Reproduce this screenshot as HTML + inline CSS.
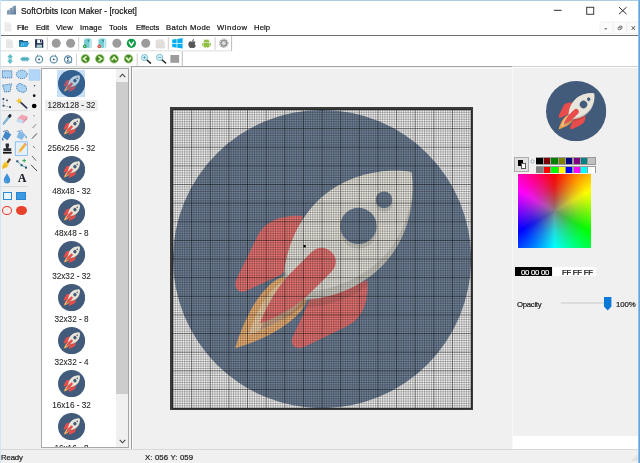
<!DOCTYPE html>
<html><head><meta charset="utf-8"><title>SoftOrbits Icon Maker - [rocket]</title>
<style>
*{margin:0;padding:0;box-sizing:border-box}
html,body{width:640px;height:463px;overflow:hidden;background:#fff}
body{position:relative;font-family:"Liberation Sans",sans-serif;font-size:7.4px;color:#1a1a1a}
.a{position:absolute}
.t{position:absolute;white-space:nowrap;line-height:1;will-change:transform;-webkit-text-stroke:0.2px currentColor}
svg{position:absolute;overflow:visible}
</style></head><body>

<svg width="0" height="0" style="left:0;top:0">
<symbol id="rk" viewBox="0 0 128 128">
<clipPath id="cb"><path d="M0 -53.5C8 -48 19.6 -34 19.6 -16C19.6 -5 15.6 7 6.5 17.5L-6.5 17.5C-15.6 7 -19.6 -5 -19.6 -16C-19.6 -34 -8 -48 0 -53.5Z"/></clipPath>
<clipPath id="cf"><path d="M19.5 -7.2C23 -4.5 26.5 0 27.7 5C28.4 8 28 10.5 27 13.5L20.8 31.5Q19.5 35.3 16.6 35Q15 34.6 14.2 33L8.4 17.2L8 10L16 0Z"/></clipPath>
<clipPath id="cl"><path d="M0 53.5C-3 48 -8.8 36 -8.8 25C-8.8 21 -8 18 -6 15L6 15C8 18 8.8 21 8.8 25C8.8 36 3 48 0 53.5Z"/></clipPath>
<circle cx="64" cy="64" r="64" style="fill:var(--bl,#435b7a)"/>
<g transform="translate(64.5,64.5) rotate(45)">
<path d="M0 53.5C-3 48 -8.8 36 -8.8 25C-8.8 21 -8 18 -6 15L6 15C8 18 8.8 21 8.8 25C8.8 36 3 48 0 53.5Z" fill="#f0a04e"/>
<path d="M0 45.5C-2.5 40 -6.4 32 -6.4 24C-6.4 20 -5.5 17 -4.5 15L4.5 15C5.5 17 6.4 20 6.4 24C6.4 32 2.5 40 0 45.5Z" fill="#f5c98f"/>
<g clip-path="url(#cl)"><path transform="translate(2,2)" d="M0 -5C3.5 -5 6 -2.5 6 1L6 14C6 22 3 32 0 38.5C-3 32 -6 22 -6 14L-6 1C-6 -2.5 -3.5 -5 0 -5Z" fill="#8a4a30" fill-opacity="0.45"/></g>
<path d="M-19.5 -7.2C-23 -4.5 -26.5 0 -27.7 5C-28.4 8 -28 10.5 -27 13.5L-20.8 31.5Q-19.5 35.3 -16.6 35Q-15 34.6 -14.2 33L-8.4 17.2L-8 10L-16 0Z" fill="#e84d4b"/>
<path d="M19.5 -7.2C23 -4.5 26.5 0 27.7 5C28.4 8 28 10.5 27 13.5L20.8 31.5Q19.5 35.3 16.6 35Q15 34.6 14.2 33L8.4 17.2L8 10L16 0Z" fill="#e84d4b"/>
<g clip-path="url(#cf)"><path transform="translate(2.4,2.4)" d="M0 -53.5C8 -48 19.6 -34 19.6 -16C19.6 -5 15.6 7 6.5 17.5L-6.5 17.5C-15.6 7 -19.6 -5 -19.6 -16C-19.6 -34 -8 -48 0 -53.5Z" fill="#c9423f"/></g>
<path d="M0 -53.5C8 -48 19.6 -34 19.6 -16C19.6 -5 15.6 7 6.5 17.5L-6.5 17.5C-15.6 7 -19.6 -5 -19.6 -16C-19.6 -34 -8 -48 0 -53.5Z" fill="#c8c7bb"/>
<g clip-path="url(#cb)"><path transform="translate(-2.4,-2.4)" d="M0 -53.5C8 -48 19.6 -34 19.6 -16C19.6 -5 15.6 7 6.5 17.5L-6.5 17.5C-15.6 7 -19.6 -5 -19.6 -16C-19.6 -34 -8 -48 0 -53.5Z" fill="#e8e6da"/>
<circle cx="1.6" cy="-19.8" r="7.9" fill="#c8c7bb"/>
<circle cx="1.2" cy="-35.7" r="3.7" fill="#c8c7bb"/></g>
<circle cx="0.3" cy="-21.1" r="7.8" style="fill:var(--bl,#435b7a)"/>
<circle cx="0.1" cy="-36.8" r="3.6" style="fill:var(--bl,#435b7a)"/>
<path d="M0 -5C3.5 -5 6 -2.5 6 1L6 14C6 22 3 32 0 38.5C-3 32 -6 22 -6 14L-6 1C-6 -2.5 -3.5 -5 0 -5Z" fill="#e84d4b"/>
</g>
</symbol>
</svg>
<div class="a" style="left:0;top:0;width:640px;height:1px;background:#a9cdea"></div>
<div class="t" style="left:20.60px;top:6.97px;font-size:8.3px;letter-spacing:0.036px;color:#111;">SoftOrbits Icon Maker - [rocket]</div>
<div class="t" style="left:17.10px;top:23.98px;font-size:7.7px;letter-spacing:-0.277px;color:#111;">File</div>
<div class="t" style="left:36.10px;top:23.98px;font-size:7.7px;letter-spacing:-0.042px;color:#111;">Edit</div>
<div class="t" style="left:55.80px;top:23.98px;font-size:7.7px;letter-spacing:0.062px;color:#111;">View</div>
<div class="t" style="left:80.10px;top:23.98px;font-size:7.7px;letter-spacing:0.180px;color:#111;">Image</div>
<div class="t" style="left:109.40px;top:23.98px;font-size:7.7px;letter-spacing:0.125px;color:#111;">Tools</div>
<div class="t" style="left:135.50px;top:23.98px;font-size:7.7px;letter-spacing:-0.021px;color:#111;">Effects</div>
<div class="t" style="left:165.75px;top:23.98px;font-size:7.7px;letter-spacing:0.366px;color:#111;">Batch Mode</div>
<div class="t" style="left:216.75px;top:23.98px;font-size:7.7px;letter-spacing:0.561px;color:#111;">Window</div>
<div class="t" style="left:254.25px;top:23.98px;font-size:7.7px;letter-spacing:0.104px;color:#111;">Help</div>
<div class="a" style="left:0;top:34.6px;width:640px;height:1.2px;background:#6e6e6e"></div>
<div class="a" style="left:0;top:66px;width:131px;height:1px;background:#d6d6d6"></div>
<div class="a" style="left:131px;top:66.1px;width:381px;height:1.7px;background:#a3a3a3"></div>
<div class="a" style="left:512px;top:66.1px;width:128px;height:1.1px;background:#d2d2d2"></div>
<svg style="left:0;top:0" width="640" height="70" viewBox="0 0 640 70"><path d="M0 50.8H231.6" stroke="#dedede" stroke-width="1" fill="none"/><path d="M231.6 36V50.8M182.3 51.3V66.5" stroke="#bdbdbd" stroke-width="1" fill="none"/><path d="M47.3 37.2V49.6M78.7 37.2V49.6M168.3 37.2V49.6M215.1 37.2V49.6M76.6 53.5V65.8M137.2 53.5V65.8" stroke="#c2c2c2" stroke-width="0.8" fill="none"/><g id="i-new"><path d="M6.6 39.8H10.6L12.6 41.8V47.9H6.6Z" fill="#ececec" stroke="#d6d6d6" stroke-width="0.6"/><path d="M7.6 42.5H11.4M7.6 44H11.4M7.6 45.5H11.4" stroke="#dadada" stroke-width="0.6"/></g><g id="i-open"><path d="M19.1 40H22.6L23.6 41.1H27.9V42.6H19.1Z" fill="#1a6288"/><path d="M19.1 46.8V41.8L20.6 42.4H27.9L27 46.8Z" fill="#1b6d9a"/><path d="M19.1 46.8L21.3 42.5H29.6L27.2 46.8Z" fill="#2aa3df"/><path d="M21.9 43.6L21 45.4M24 43.4L23 45.6" stroke="#9fdcf5" stroke-width="0.7"/></g><g id="i-save"><path d="M35.1 39.2H42L43.3 40.5V47.8H35.1Z" fill="#1b2b4b"/><rect x="37.1" y="39.6" width="4.5" height="3.6" fill="#f3f6fa"/><rect x="40" y="39.9" width="1" height="2.4" fill="#1b2b4b"/><rect x="36.6" y="44.6" width="5.4" height="3.2" fill="#a9c9cc"/></g><circle cx="56.25" cy="43.3" r="4.5" fill="#9b9b9b"/><circle cx="70.6" cy="43.3" r="4.5" fill="#9b9b9b"/><circle cx="116.9" cy="43.3" r="4.5" fill="#9b9b9b"/><circle cx="145.75" cy="43.3" r="4.5" fill="#9b9b9b"/><path d="M84.10000000000001 38.9H91.7V47.8H84.10000000000001Z" fill="#c9ecf2"/><path d="M84.10000000000001 39.4H89.5V47.8H84.10000000000001Z" fill="#74cdd0"/><path d="M84.9 38.4H90.9V39.5H84.9Z" fill="#8fd6dc"/><path d="M86.9 39.6L89.30000000000001 39.6L89.30000000000001 42.4Z" fill="#2f8797"/><path d="M91.30000000000001 39.6V47.6" stroke="#9bd5e0" stroke-width="0.7"/><circle cx="84.7" cy="46.4" r="1.8" fill="#2a9a50"/><circle cx="84.7" cy="46.4" r="0.6" fill="#fff" fill-opacity="0.8"/><path d="M98.60000000000001 38.9H106.2V47.8H98.60000000000001Z" fill="#c9ecf2"/><path d="M98.60000000000001 39.4H104.0V47.8H98.60000000000001Z" fill="#74cdd0"/><path d="M99.4 38.4H105.4V39.5H99.4Z" fill="#8fd6dc"/><path d="M101.4 39.6L103.80000000000001 39.6L103.80000000000001 42.4Z" fill="#2f8797"/><path d="M105.80000000000001 39.6V47.6" stroke="#9bd5e0" stroke-width="0.7"/><circle cx="99.2" cy="46.4" r="1.8" fill="#e24848"/><circle cx="99.2" cy="46.4" r="0.6" fill="#fff" fill-opacity="0.8"/><circle cx="131.4" cy="43.3" r="4.6" fill="#0d9a45"/><path d="M129 41.6L131.4 45.6L133.8 41.6" fill="none" stroke="#fff" stroke-width="1.5" stroke-linejoin="round"/><path d="M156 40.6H162.6L164.6 42.4V48H156Z" fill="#e6e3dc" stroke="#d4d4d4" stroke-width="0.6"/><path d="M157.4 39.6H163.4V41" fill="none" stroke="#d9d9d9" stroke-width="0.6"/><path d="M157.3 43.3H163M157.3 44.9H163M157.3 46.4H163" stroke="#d3d3d3" stroke-width="0.6"/><path d="M172.2 39.6L176.6 39V43H172.2ZM177.3 38.9L182.6 38.1V43H177.3ZM172.2 43.7H176.6V47.7L172.2 47.1ZM177.3 43.7H182.6V48.5L177.3 47.8Z" fill="#06aef0"/><path d="M192.3 41.6C193.4 41.1 194.6 41 195.6 41.9C194.4 42.8 194.3 44.6 195.9 45.5C195.3 47 194.3 48.2 193.4 48.1C192.7 48 192.5 47.7 192.1 47.7C191.6 47.7 191.4 48.1 190.7 48.1C189.5 48 188.3 45.9 188.3 44.2C188.3 42 190 41 191.2 41.4C191.7 41.5 192 41.7 192.3 41.6Z" fill="#575757"/><path d="M192.2 41.1C192.1 40 193 39.1 194 39C194.1 40.1 193.3 41 192.2 41.1Z" fill="#575757"/><g fill="#8fc043"><path d="M203.5 42.4A3 3 0 0 1 209.5 42.4Z"/><path d="M203.5 42.9H209.5V46.4Q209.5 47 208.9 47H204.1Q203.5 47 203.5 46.4Z"/><rect x="202.2" y="42.9" width="0.95" height="3" rx="0.45"/><rect x="209.85" y="42.9" width="0.95" height="3" rx="0.45"/><rect x="204.6" y="46.5" width="1" height="1.7" rx="0.4"/><rect x="207.4" y="46.5" width="1" height="1.7" rx="0.4"/><path d="M204.6 40.2L204 39.3M208.4 40.2L209 39.3" stroke="#8fc043" stroke-width="0.4"/></g><g><circle cx="223.8" cy="43.2" r="4.1" fill="none" stroke="#9a9a9a" stroke-width="1.2" stroke-dasharray="1.2 0.95"/><circle cx="223.8" cy="43.2" r="3.5" fill="#8f8f8f"/><circle cx="223.8" cy="43.2" r="2.1" fill="#d9d9d9"/></g><path d="M10.1 53.9L13 57H11.7V60.8H13L10.1 63.9L7.2 60.8H8.5V57H7.2Z" fill="#5fbbc9"/><path d="M8.5 58.9H11.7" stroke="#e8f6f9" stroke-width="0.7"/><path d="M10.1 55.5V62.3" stroke="#8ad3dd" stroke-width="0.6" stroke-dasharray="0.6 0.6"/><path d="M19.9 59.1L22.9 56.4V57.6H26.9V56.4L29.9 59.1L26.9 61.8V60.6H22.9V61.8Z" fill="#5fbbc9"/><path d="M23.4 57.4V60.8M24.9 56.6V61.6M26.4 57.4V60.8" stroke="#3a93a8" stroke-width="0.55"/><circle cx="39.1" cy="59.4" r="3.5" fill="none" stroke="#5b8ca6" stroke-width="1.25"/><circle cx="39.1" cy="59.4" r="0.95" fill="#2b5d7c"/><path d="M37 54.4L39.6 55.6L37.4 57.2Z" fill="#5b8ca6"/><path d="M38.8 55V56.6" stroke="#fff" stroke-width="0.9"/><circle cx="53.75" cy="59.4" r="3.5" fill="none" stroke="#5b8ca6" stroke-width="1.25"/><circle cx="53.75" cy="59.4" r="0.95" fill="#2b5d7c"/><path d="M55.9 54.4L53.3 55.6L55.5 57.2Z" fill="#5b8ca6"/><path d="M54.1 55V56.6" stroke="#fff" stroke-width="0.9"/><circle cx="68.1" cy="59.4" r="3.6" fill="none" stroke="#5b8ca6" stroke-width="1.25"/><path d="M69.6 57.7H66.9L68.3 59.4L66.9 61.1H69.6" fill="none" stroke="#2c5f7c" stroke-width="1"/><path d="M70.6 61.4L72.4 62.4L70.6 63.4Z" fill="#5b8ca6"/><circle cx="85.4" cy="58.8" r="4.3" fill="#47852a" stroke="#9ccb76" stroke-width="0.8"/><path d="M86.6 56.4L83.6 58.8L86.6 61.2" fill="none" stroke="#dcf8b8" stroke-width="1.7" stroke-linejoin="miter"/><circle cx="99.75" cy="58.8" r="4.3" fill="#47852a" stroke="#9ccb76" stroke-width="0.8"/><path d="M98.55 56.4L101.55 58.8L98.55 61.2" fill="none" stroke="#dcf8b8" stroke-width="1.7" stroke-linejoin="miter"/><circle cx="114.1" cy="58.8" r="4.3" fill="#47852a" stroke="#9ccb76" stroke-width="0.8"/><path d="M111.7 60.2L114.1 57.2L116.5 60.2" fill="none" stroke="#dcf8b8" stroke-width="1.7" stroke-linejoin="miter"/><circle cx="128.5" cy="58.8" r="4.3" fill="#47852a" stroke="#9ccb76" stroke-width="0.8"/><path d="M126.1 57.4L128.5 60.4L130.9 57.4" fill="none" stroke="#dcf8b8" stroke-width="1.7" stroke-linejoin="miter"/><path d="M146.7 59.7L150.5 63.1" stroke="#2a2a2a" stroke-width="1.5" stroke-linecap="round"/><circle cx="144.5" cy="57.5" r="3.1" fill="#d9f0f6" stroke="#62b4c6" stroke-width="0.8"/><path d="M142.9 57.5H146.1" stroke="#3fa0b6" stroke-width="0.7"/><path d="M144.5 55.9V59.1" stroke="#3fa0b6" stroke-width="0.7"/><path d="M161.79999999999998 59.6L165.6 63.0" stroke="#2a2a2a" stroke-width="1.5" stroke-linecap="round"/><circle cx="159.6" cy="57.4" r="3.1" fill="#d9f0f6" stroke="#62b4c6" stroke-width="0.8"/><path d="M158.0 57.4H161.2" stroke="#3fa0b6" stroke-width="0.7"/><rect x="170.4" y="55" width="8.7" height="7.8" fill="#9c9c9c"/></svg>
<svg style="left:0;top:0" width="640" height="36" viewBox="0 0 640 36"><defs><linearGradient id="ag" x1="0" y1="0" x2="1" y2="1"><stop offset="0" stop-color="#9fb7cb"/><stop offset="1" stop-color="#4f6c8a"/></linearGradient></defs><path d="M7 14.6V10.4L9.8 9.6V8.2L12.8 7.2V6.2L15.9 5.4V14.6Z" fill="url(#ag)"/><path d="M9.9 9.6V14.6M12.9 7.2V14.6" stroke="#dfe8f0" stroke-width="0.4"/><path d="M4.9 22.7H8.9L10.9 24.7V31H4.9Z" fill="#efefef" stroke="#dedede" stroke-width="0.5"/><path d="M6 25.6H9.8M6 27.2H9.8M6 28.8H9.8" stroke="#e0e0e0" stroke-width="0.6"/><path d="M553.8 10.3H561.6" stroke="#2b2b2b" stroke-width="1"/><rect x="586.7" y="7.3" width="7" height="7" fill="none" stroke="#3a3a3a" stroke-width="1"/><path d="M619 7.1L626.6 14.2M626.6 7.1L619 14.2" stroke="#2b2b2b" stroke-width="1"/><rect x="600" y="22" width="13" height="11.6" fill="#fbfbfb" stroke="#ececec" stroke-width="0.6"/><rect x="613.6" y="22" width="13" height="11.6" fill="#fbfbfb" stroke="#ececec" stroke-width="0.6"/><rect x="627.2" y="22" width="11" height="11.6" fill="#fbfbfb" stroke="#ececec" stroke-width="0.6"/><path d="M604.6 28.8H607" stroke="#555" stroke-width="1"/><path d="M618.2 27.4H620.8V29.6H618.2ZM619.4 27.2V26.2H622V28.4H621" fill="none" stroke="#555" stroke-width="0.7"/><path d="M631.6 26.2L635 30M635 26.2L631.6 30" stroke="#444" stroke-width="0.9"/></svg>
<div class="a" style="left:0;top:67.4px;width:640px;height:382px;background:#f0f0f0"></div>
<div class="a" style="left:132px;top:67.8px;width:380px;height:0.9px;background:#fbfbfb"></div>
<div class="a" style="left:512px;top:67.2px;width:128px;height:1px;background:#fdfdfd"></div>
<div class="a" style="left:511.8px;top:67.2px;width:1px;height:382px;background:#f9f9f9"></div>
<div class="a" style="left:512.5px;top:435.8px;width:127.5px;height:13.8px;background:#fff"></div>
<div class="a" style="left:0;top:449.4px;width:640px;height:13.6px;background:#f0f0f0;border-top:1px solid #d9d9d9"></div>
<svg style="left:632px;top:455px" width="6" height="6" viewBox="0 0 6 6"><path d="M4.5 0.5h1v1h-1zM4.5 2.5h1v1h-1zM4.5 4.5h1v1h-1zM2.5 2.5h1v1h-1zM2.5 4.5h1v1h-1zM0.5 4.5h1v1h-1z" fill="#bdbdbd"/></svg>
<div class="t" style="left:1.30px;top:454.00px;font-size:7.8px;letter-spacing:-0.149px;color:#1a1a1a;">Ready</div>
<div class="t" style="left:144.50px;top:454.00px;font-size:7.8px;letter-spacing:0.124px;color:#1a1a1a;">X: 056 Y: 059</div>
<div class="a" style="left:130.8px;top:67px;width:1.2px;height:382px;background:#9c9c9c"></div>
<div class="a" style="left:129px;top:67px;width:1.8px;height:382px;background:#f6f6f6"></div>
<div class="a" style="left:132px;top:67.8px;width:0.9px;height:381.6px;background:#fbfbfb"></div>
<div class="a" style="left:41.3px;top:68.2px;width:87.5px;height:379.5px;background:#fff;border:1px solid #a8a8a8;overflow:hidden" id="list">
<div class="a" style="left:73.9px;top:0;width:11.8px;height:379px;background:#f0f0f0"></div>
<div class="a" style="left:73.9px;top:13.1px;width:11.8px;height:311.3px;background:#cdcdcd"></div>
<svg style="left:76.6px;top:3.7px" width="7" height="5" viewBox="0 0 7 5"><path d="M0.7 4.2L3.5 1.2L6.3 4.2" fill="none" stroke="#404040" stroke-width="1.1"/></svg>
<svg style="left:76.6px;top:369.5px" width="7" height="5" viewBox="0 0 7 5"><path d="M0.7 0.8L3.5 3.8L6.3 0.8" fill="none" stroke="#404040" stroke-width="1.1"/></svg>
<div class="a" style="left:3px;top:30.6px;width:52.5px;height:11.6px;background:#efefef"></div>
<svg style="left:15.6px;top:0.8px" width="27.2" height="27.2"><use href="#rk" width="27.2" height="27.2"/></svg>
<div class="t" style="left:-0.7px;width:59px;text-align:center;top:32.7px;font-size:8.2px;color:#262626;-webkit-text-stroke:0.08px #262626">128x128 - 32</div>
<svg style="left:15.6px;top:43.7px" width="27.2" height="27.2"><use href="#rk" width="27.2" height="27.2"/></svg>
<div class="t" style="left:-0.7px;width:59px;text-align:center;top:75.6px;font-size:8.2px;color:#262626;-webkit-text-stroke:0.08px #262626">256x256 - 32</div>
<svg style="left:15.6px;top:86.6px" width="27.2" height="27.2"><use href="#rk" width="27.2" height="27.2"/></svg>
<div class="t" style="left:-0.7px;width:59px;text-align:center;top:118.5px;font-size:8.2px;color:#262626;-webkit-text-stroke:0.08px #262626">48x48 - 32</div>
<svg style="left:15.6px;top:129.4px" width="27.2" height="27.2"><use href="#rk" width="27.2" height="27.2"/></svg>
<div class="t" style="left:-0.7px;width:59px;text-align:center;top:161.3px;font-size:8.2px;color:#262626;-webkit-text-stroke:0.08px #262626">48x48 - 8</div>
<svg style="left:15.6px;top:172.3px" width="27.2" height="27.2"><use href="#rk" width="27.2" height="27.2"/></svg>
<div class="t" style="left:-0.7px;width:59px;text-align:center;top:204.2px;font-size:8.2px;color:#262626;-webkit-text-stroke:0.08px #262626">32x32 - 32</div>
<svg style="left:15.6px;top:215.2px" width="27.2" height="27.2"><use href="#rk" width="27.2" height="27.2"/></svg>
<div class="t" style="left:-0.7px;width:59px;text-align:center;top:247.1px;font-size:8.2px;color:#262626;-webkit-text-stroke:0.08px #262626">32x32 - 8</div>
<svg style="left:15.6px;top:258.1px" width="27.2" height="27.2"><use href="#rk" width="27.2" height="27.2"/></svg>
<div class="t" style="left:-0.7px;width:59px;text-align:center;top:290.0px;font-size:8.2px;color:#262626;-webkit-text-stroke:0.08px #262626">32x32 - 4</div>
<svg style="left:15.6px;top:301.0px" width="27.2" height="27.2"><use href="#rk" width="27.2" height="27.2"/></svg>
<div class="t" style="left:-0.7px;width:59px;text-align:center;top:332.9px;font-size:8.2px;color:#262626;-webkit-text-stroke:0.08px #262626">16x16 - 32</div>
<svg style="left:15.6px;top:343.8px" width="27.2" height="27.2"><use href="#rk" width="27.2" height="27.2"/></svg>
<div class="t" style="left:-0.7px;width:59px;text-align:center;top:375.7px;font-size:8.2px;color:#262626;-webkit-text-stroke:0.08px #262626">16x16 - 8</div>
<div class="a" style="left:15px;top:0.7px;width:27.7px;height:27.4px;background:rgba(0,113,218,0.22)"></div>
</div>
<svg style="left:0;top:0" width="44" height="230" viewBox="0 0 44 230"><rect x="2.4" y="70.8" width="9.4" height="7" fill="#a9d3f3" stroke="#2b5f9e" stroke-width="0.8" stroke-dasharray="1.2 0.8"/><ellipse cx="21.8" cy="74.4" rx="5.4" ry="4.2" fill="#a9d3f3" stroke="#2b5f9e" stroke-width="0.8" stroke-dasharray="1.2 0.8"/><rect x="29" y="69.8" width="11" height="10.4" fill="#b3d7f6" stroke="#9ccaf2" stroke-width="0.6"/><path d="M2.6 85.2L11.6 83.8L10 91.6L4.6 92Z" fill="#a9d3f3" stroke="#2b5f9e" stroke-width="0.8" stroke-dasharray="1.2 0.8"/><path d="M17 85.5C18 83 21.5 83 22.5 85C24.5 84.5 27 86.5 26.6 89.5C26 92.5 22.5 93.2 20.5 91.5C18 92 15.8 88.5 17 85.5Z" fill="#a9d3f3" stroke="#2b5f9e" stroke-width="0.8" stroke-dasharray="1.2 0.8"/><circle cx="34.5" cy="85.7" r="0.65" fill="#222"/><circle cx="34.2" cy="95.7" r="1.35" fill="#111"/><circle cx="34.2" cy="106" r="2.35" fill="#000"/><path d="M3.4 99V105.6L10 107.2" fill="none" stroke="#5b6b80" stroke-width="0.6" stroke-dasharray="0.9 0.6"/><rect x="2.5" y="98" width="1.8" height="1.8" fill="#33475f"/><rect x="6.2" y="99.6" width="1.6" height="1.6" fill="#33475f"/><rect x="2.6" y="104.8" width="1.8" height="1.8" fill="#33475f"/><rect x="9.2" y="106.2" width="1.8" height="1.8" fill="#33475f"/><path d="M20.2 101.8L26.6 107.8" stroke="#2c3350" stroke-width="1.7" stroke-linecap="round"/><path d="M18.6 97.6L19.6 99.5L21.8 99.2L20.5 100.9L21.7 102.8L19.5 102.3L18 104L17.9 101.7L15.9 100.8L18 100Z" fill="#f6c627"/><path d="M2 110.6H27.5M0 186.6H28" stroke="#d2d2d2" stroke-width="0.8"/><path d="M9.4 114.2C10.8 113.6 12 115 11.2 116.4L9.6 118.2L7.6 116.2Z" fill="#1f2630"/><path d="M8 116.8L9.2 118L4.8 123.6L3 124.6L3.4 122.6Z" fill="#8fc4ea" stroke="#4a7eab" stroke-width="0.5"/><path d="M21.6 114.6L27.8 116.4L23.4 120.4L17.2 118.6Z" fill="#f3a6b6"/><path d="M17.2 118.6L23.4 120.4L22.6 123.6L16.4 121.8Z" fill="#bfdcf2"/><path d="M23.4 120.4L27.8 116.4L27 119.4L22.6 123.6Z" fill="#e48ea2"/><circle cx="34" cy="115.8" r="0.5" fill="#333"/><path d="M32.6 128L36 124.2" stroke="#333" stroke-width="0.6"/><path d="M32 138.6L37 133.4" stroke="#333" stroke-width="0.9"/><path d="M5.6 131L11.4 134.6L7.4 140.2L2.6 137Z" fill="#3f86c8"/><path d="M3 131.6L7.6 130.4L9 133" fill="none" stroke="#2a5c8e" stroke-width="0.7"/><path d="M2.2 137.4C1.6 139 2 140.4 3 140.4C4 140.4 3.8 138.6 2.2 137.4Z" fill="#2c6cb0"/><path d="M19.4 131L25.6 134.4L22 140L16.6 137.2Z" fill="#86b9e4"/><path d="M17 131.6L21.6 130.4L23 133" fill="none" stroke="#5b8fbf" stroke-width="0.7"/><path d="M25.6 135C26.8 136.4 27.2 138 26.4 138.6C25.6 139 25 137 25.6 135Z" fill="#5a97cf"/><path d="M5.8 143.4H8.8C9.6 145 8.6 146.6 8.4 148.2H11.2V151H3.4V148.2H6.2C6 146.6 5 145 5.8 143.4Z" fill="#2b2f38"/><rect x="3" y="151.8" width="8.6" height="1.8" fill="#111"/><rect x="15.3" y="141.8" width="12.2" height="13.6" fill="#e4f0fb" stroke="#79b7ee" stroke-width="0.8"/><path d="M24.2 143.6L26.2 145.2L20.6 152.2L18.6 150.6Z" fill="#f2b43c"/><path d="M18.6 150.6L20.6 152.2L18 153.4Z" fill="#f0d9b0"/><path d="M24.2 143.6L25 142.8L26.9 144.4L26.2 145.2Z" fill="#e77f6a"/><path d="M33 146L35 148.2" stroke="#333" stroke-width="0.6"/><path d="M32 156L36 160.6" stroke="#333" stroke-width="0.7"/><path d="M31 164.8L37 171" stroke="#333" stroke-width="0.9"/><path d="M9.2 158L11.2 159.4L8 163.4L6.4 162.2Z" fill="#5a3a22"/><path d="M6 161.8L8.6 163.8C8.6 166 7 168.6 2.4 168.6C1.8 166 3 162.6 6 161.8Z" fill="#f7c52e"/><path d="M2.4 168.6C4 167.6 5 166.4 5.4 165" stroke="#c9951c" stroke-width="0.5" fill="none"/><path d="M17.4 161.4L21.6 165.2L26 167.6" fill="none" stroke="#3f9db3" stroke-width="0.9"/><rect x="16.3" y="160.3" width="2" height="2" fill="#24506e"/><rect x="20.6" y="164.2" width="2" height="2" fill="#24506e"/><rect x="25" y="166.6" width="2" height="2" fill="#24506e"/><path d="M22.4 160.6H26M24.2 158.8V162.4" stroke="#2fa84f" stroke-width="1"/><path d="M7 173.2C8.6 176 10.2 178 10.2 180.2A3.2 3.2 0 0 1 3.8 180.2C3.8 178 5.4 176 7 173.2Z" fill="#3b93db"/><path d="M5.2 180.4A1.9 1.9 0 0 0 6.8 182.2" stroke="#a9d4f5" stroke-width="0.6" fill="none"/></svg>
<div class="t" style="left:17.6px;top:173.2px;font-family:'Liberation Serif',serif;font-weight:bold;font-size:11.5px;color:#1b1f2a">A</div>
<div class="a" style="left:3px;top:192px;width:9.2px;height:7.6px;background:#eaf4fd;border:1.3px solid #2b8bd9"></div>
<div class="a" style="left:16.4px;top:192px;width:9.8px;height:7.6px;background:#3d9be2;border:0.8px solid #2b83cf"></div>
<div class="a" style="left:2.2px;top:205.6px;width:10px;height:9px;border-radius:50%;border:1.5px solid #e23b2b;background:#fbeeee"></div>
<div class="a" style="left:16.2px;top:205.6px;width:10.8px;height:9px;border-radius:50%;background:#e8412c"></div>
<div class="a" style="left:170.4px;top:107.2px;width:303px;height:302.9px;background:#3a3a3a"></div>
<div class="a" style="left:173.1px;top:109.9px;width:298.1px;height:298.1px;background:#f0f0f0"></div>
<svg style="left:173.1px;top:109.9px" width="298.1" height="298.1" viewBox="0 0 128 128"><use href="#rk" width="128" height="128"/><rect width="128" height="128" fill="#fff" fill-opacity="0.25"/><rect x="56" y="58" width="1" height="1" fill="#000"/><path d="M1 0V128M0 1H128M2 0V128M0 2H128M3 0V128M0 3H128M4 0V128M0 4H128M5 0V128M0 5H128M6 0V128M0 6H128M7 0V128M0 7H128M9 0V128M0 9H128M10 0V128M0 10H128M11 0V128M0 11H128M12 0V128M0 12H128M13 0V128M0 13H128M14 0V128M0 14H128M15 0V128M0 15H128M17 0V128M0 17H128M18 0V128M0 18H128M19 0V128M0 19H128M20 0V128M0 20H128M21 0V128M0 21H128M22 0V128M0 22H128M23 0V128M0 23H128M25 0V128M0 25H128M26 0V128M0 26H128M27 0V128M0 27H128M28 0V128M0 28H128M29 0V128M0 29H128M30 0V128M0 30H128M31 0V128M0 31H128M33 0V128M0 33H128M34 0V128M0 34H128M35 0V128M0 35H128M36 0V128M0 36H128M37 0V128M0 37H128M38 0V128M0 38H128M39 0V128M0 39H128M41 0V128M0 41H128M42 0V128M0 42H128M43 0V128M0 43H128M44 0V128M0 44H128M45 0V128M0 45H128M46 0V128M0 46H128M47 0V128M0 47H128M49 0V128M0 49H128M50 0V128M0 50H128M51 0V128M0 51H128M52 0V128M0 52H128M53 0V128M0 53H128M54 0V128M0 54H128M55 0V128M0 55H128M57 0V128M0 57H128M58 0V128M0 58H128M59 0V128M0 59H128M60 0V128M0 60H128M61 0V128M0 61H128M62 0V128M0 62H128M63 0V128M0 63H128M65 0V128M0 65H128M66 0V128M0 66H128M67 0V128M0 67H128M68 0V128M0 68H128M69 0V128M0 69H128M70 0V128M0 70H128M71 0V128M0 71H128M73 0V128M0 73H128M74 0V128M0 74H128M75 0V128M0 75H128M76 0V128M0 76H128M77 0V128M0 77H128M78 0V128M0 78H128M79 0V128M0 79H128M81 0V128M0 81H128M82 0V128M0 82H128M83 0V128M0 83H128M84 0V128M0 84H128M85 0V128M0 85H128M86 0V128M0 86H128M87 0V128M0 87H128M89 0V128M0 89H128M90 0V128M0 90H128M91 0V128M0 91H128M92 0V128M0 92H128M93 0V128M0 93H128M94 0V128M0 94H128M95 0V128M0 95H128M97 0V128M0 97H128M98 0V128M0 98H128M99 0V128M0 99H128M100 0V128M0 100H128M101 0V128M0 101H128M102 0V128M0 102H128M103 0V128M0 103H128M105 0V128M0 105H128M106 0V128M0 106H128M107 0V128M0 107H128M108 0V128M0 108H128M109 0V128M0 109H128M110 0V128M0 110H128M111 0V128M0 111H128M113 0V128M0 113H128M114 0V128M0 114H128M115 0V128M0 115H128M116 0V128M0 116H128M117 0V128M0 117H128M118 0V128M0 118H128M119 0V128M0 119H128M121 0V128M0 121H128M122 0V128M0 122H128M123 0V128M0 123H128M124 0V128M0 124H128M125 0V128M0 125H128M126 0V128M0 126H128M127 0V128M0 127H128" stroke="#000" stroke-opacity="0.36" stroke-width="0.3" fill="none"/><path d="M0 0V128M0 0H128M8 0V128M0 8H128M16 0V128M0 16H128M24 0V128M0 24H128M32 0V128M0 32H128M40 0V128M0 40H128M48 0V128M0 48H128M56 0V128M0 56H128M64 0V128M0 64H128M72 0V128M0 72H128M80 0V128M0 80H128M88 0V128M0 88H128M96 0V128M0 96H128M104 0V128M0 104H128M112 0V128M0 112H128M120 0V128M0 120H128M128 0V128M0 128H128" stroke="#000" stroke-opacity="0.6" stroke-width="0.38" fill="none"/></svg>
<svg style="left:545.8px;top:80.9px" width="60.3" height="60.3"><use href="#rk" width="60.3" height="60.3"/></svg>
<div class="a" style="left:514.4px;top:157px;width:14.8px;height:15px;background:#e1e1e1;border:1px solid #adadad"></div>
<div class="a" style="left:517.5px;top:160.4px;width:5.6px;height:5.4px;background:#000"></div>
<div class="a" style="left:520.5px;top:163px;width:5.8px;height:6px;background:#fff;border:0.7px solid #555"></div>
<svg style="left:530.3px;top:158.5px" width="5" height="5" viewBox="0 0 5 5"><circle cx="2.5" cy="2.5" r="1.7" fill="none" stroke="#7f8fa0" stroke-width="0.7"/></svg>
<div class="a" style="left:535.6px;top:156.8px;width:60.6px;height:7.8px;background:#9a9a9a"></div>
<div class="a" style="left:535.6px;top:165.8px;width:60.6px;height:7.6px;background:#9a9a9a"></div>
<div class="a" style="left:536.40px;top:157.6px;width:6.3px;height:6.2px;background:#000000"></div>
<div class="a" style="left:536.40px;top:166.6px;width:6.3px;height:6px;background:#808080"></div>
<div class="a" style="left:543.82px;top:157.6px;width:6.3px;height:6.2px;background:#800000"></div>
<div class="a" style="left:543.82px;top:166.6px;width:6.3px;height:6px;background:#ff0000"></div>
<div class="a" style="left:551.24px;top:157.6px;width:6.3px;height:6.2px;background:#008000"></div>
<div class="a" style="left:551.24px;top:166.6px;width:6.3px;height:6px;background:#00ff00"></div>
<div class="a" style="left:558.66px;top:157.6px;width:6.3px;height:6.2px;background:#808000"></div>
<div class="a" style="left:558.66px;top:166.6px;width:6.3px;height:6px;background:#ffff00"></div>
<div class="a" style="left:566.08px;top:157.6px;width:6.3px;height:6.2px;background:#000080"></div>
<div class="a" style="left:566.08px;top:166.6px;width:6.3px;height:6px;background:#0000ff"></div>
<div class="a" style="left:573.50px;top:157.6px;width:6.3px;height:6.2px;background:#800080"></div>
<div class="a" style="left:573.50px;top:166.6px;width:6.3px;height:6px;background:#ff00ff"></div>
<div class="a" style="left:580.92px;top:157.6px;width:6.3px;height:6.2px;background:#008080"></div>
<div class="a" style="left:580.92px;top:166.6px;width:6.3px;height:6px;background:#00ffff"></div>
<div class="a" style="left:588.34px;top:157.6px;width:6.3px;height:6.2px;background:#c0c0c0"></div>
<div class="a" style="left:588.34px;top:166.6px;width:6.3px;height:6px;background:#ffffff"></div>
<div class="a" style="left:517.5px;top:174.1px;width:73.8px;height:73.6px;background:radial-gradient(circle closest-side at 50% 50%,rgba(128,128,128,0.95) 0%,rgba(128,128,128,0.6) 28%,rgba(128,128,128,0.25) 60%,rgba(128,128,128,0) 100%),conic-gradient(from 0deg at 50% 50%,#ff0000,#ffff00 16.67%,#00ff00 33.33%,#00ffff 50%,#0000ff 66.67%,#ff00ff 83.33%,#ff0000)"></div>
<div class="a" style="left:516.6px;top:174.1px;width:0.9px;height:73.6px;background:#fcfcfc"></div>
<div class="a" style="left:515.3px;top:267.4px;width:37.2px;height:8.9px;background:#000"></div>
<div class="a" style="left:552.5px;top:267.4px;width:43.4px;height:8.9px;background:#fff"></div>
<div class="t" style="left:521.00px;top:269.00px;font-size:7.8px;letter-spacing:-0.282px;color:#fff;">00 00 00</div>
<div class="t" style="left:562.00px;top:269.00px;font-size:7.8px;letter-spacing:-0.277px;color:#000;">FF FF FF</div>
<div class="t" style="left:516.60px;top:300.50px;font-size:7.8px;letter-spacing:-0.306px;color:#1a1a1a;">Opacity</div>
<div class="a" style="left:561px;top:302.3px;width:44px;height:1.8px;background:#dcdcdc"></div>
<svg style="left:604.2px;top:296.8px" width="7.4" height="13.6" viewBox="0 0 7.4 13.6"><path d="M0 0H7.4V9.6L3.7 13.6L0 9.6Z" fill="#0a78d7"/></svg>
<div class="t" style="left:616.20px;top:300.50px;font-size:7.8px;letter-spacing:-0.087px;color:#1a1a1a;">100%</div>
<div class="a" style="left:638px;top:0;width:2px;height:463px;background:linear-gradient(90deg,#a9cdea,#4b97d8)"></div>
<div class="a" style="left:0;top:0;width:1px;height:463px;background:#d3e5f2"></div>
</body></html>
